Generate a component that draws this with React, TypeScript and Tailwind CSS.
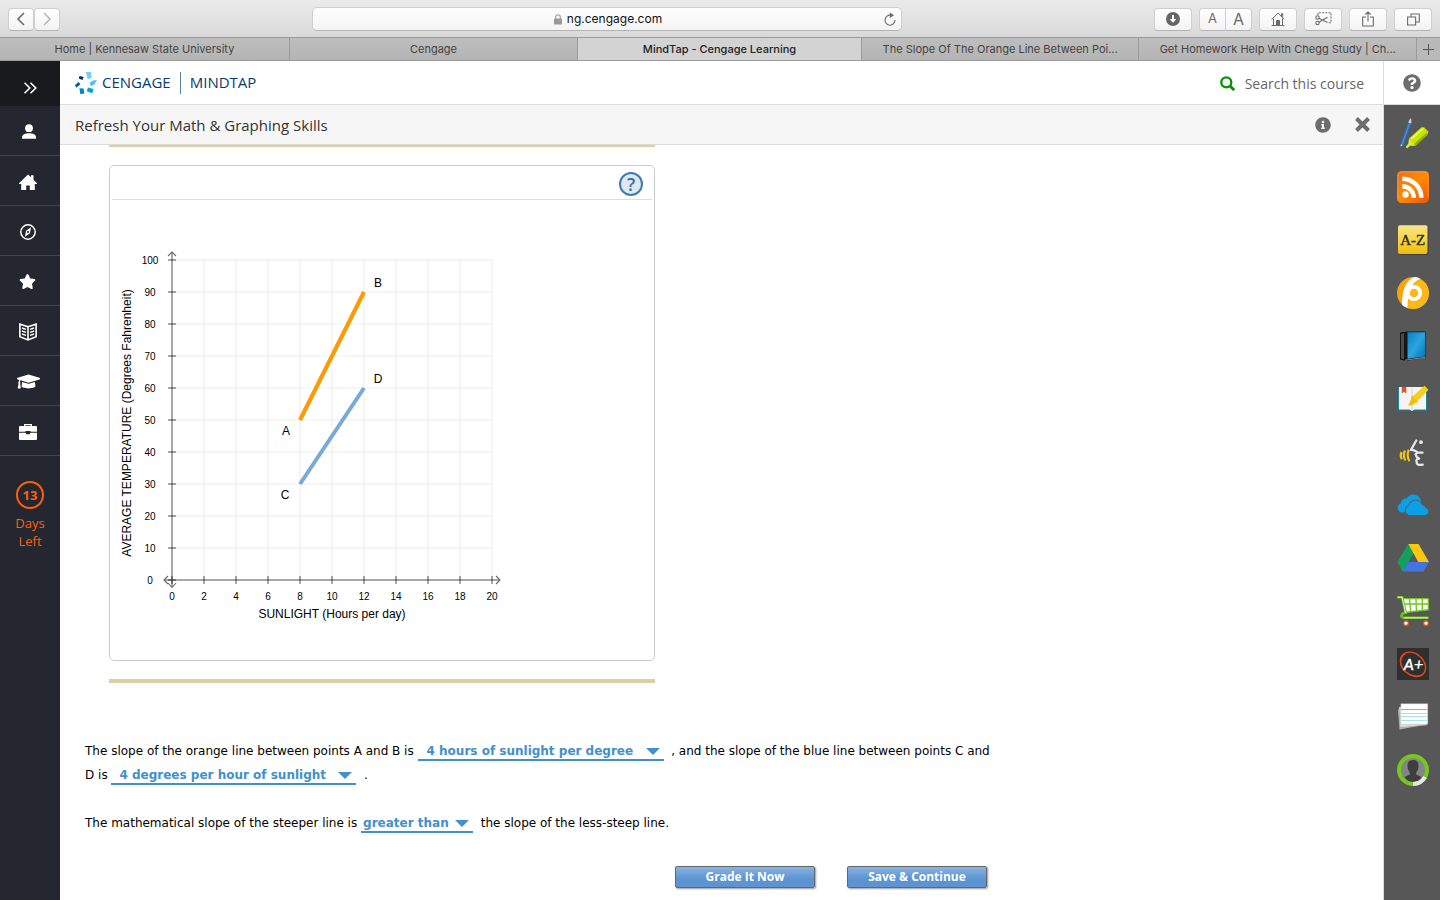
import type { ReactNode } from "react";
import { FaGraduationCap, FaInfoCircle, FaQuestionCircle, FaStar } from "react-icons/fa";

/* ---------- Browser chrome ---------- */

const chromeButton =
  "flex h-[23px] items-center justify-center rounded-[4px] border border-[#cfcfcf] border-b-[#b5b5b5] bg-gradient-to-b from-white to-[#f3f3f3] text-[#6b6b6b]";

function Toolbar() {
  return (
    <div className="flex h-[37px] items-center bg-gradient-to-b from-[#ebebeb] to-[#d9d9d9] px-2 pt-px">
      <div className="flex w-[304px] shrink-0">
        <button aria-label="Back" className={`${chromeButton} w-[26px]`}>
          <svg width="10" height="14" viewBox="0 0 10 14" fill="none" stroke="currentColor" strokeWidth="1.6">
            <path d="M8 1 2 7l6 6" />
          </svg>
        </button>
        <button aria-label="Forward" className={`${chromeButton} w-[26px]`}>
          <svg width="10" height="14" viewBox="0 0 10 14" fill="none" stroke="#b9b9b9" strokeWidth="1.6">
            <path d="m2 1 6 6-6 6" />
          </svg>
        </button>
      </div>
      <div className="flex h-[24px] flex-1 items-center rounded-[5px] border border-[#cfcfcf] border-b-[#b5b5b5] bg-gradient-to-b from-white to-[#f3f3f3] px-1 text-[12px] text-[#111]">
        <div className="flex flex-1 items-center justify-center gap-[5px] pl-4">
          <svg width="8" height="11" viewBox="0 0 8 11" fill="#9a9a9a">
            <rect y="4.5" width="8" height="6" rx="0.6" />
            <path d="M1.7 5V3a2.3 2.3 0 0 1 4.6 0v2" fill="none" stroke="#9a9a9a" strokeWidth="1.1" />
          </svg>
          <span>ng.cengage.com</span>
        </div>
        <button aria-label="Reload" className="text-[#6b6b6b]">
          <svg width="14" height="15" viewBox="0 0 14 15" fill="none" stroke="currentColor" strokeWidth="1.1">
            <path d="M7.5 3.2A5 5 0 1 0 12 8" />
            <path d="M6.8.5 11 3.2 6.8 6z" fill="currentColor" stroke="none" />
          </svg>
        </button>
      </div>
      <div className="ml-[252px] flex shrink-0 gap-[7px]">
        <button aria-label="Downloads" className={`${chromeButton} w-[38px]`}>
          <svg width="14" height="14" viewBox="0 0 14 14">
            <circle cx="7" cy="7" r="7" fill="#666" />
            <path d="M6 3h2v4h2.4L7 10.8 3.600 7H6z" fill="#fff" />
          </svg>
        </button>
        <div className="flex">
          <button aria-label="Smaller text" className={`${chromeButton} w-[27px] rounded-r-none text-[13px]`}>A</button>
          <button aria-label="Larger text" className={`${chromeButton} w-[26px] rounded-l-none border-l-0 text-[16px]`}>A</button>
        </div>
        <button aria-label="Home page" className={`${chromeButton} w-[38px]`}>
          <svg width="14" height="14" viewBox="0 0 14 14" fill="none" stroke="currentColor" strokeWidth="1">
            <path d="M.7 7.500 7 1l6.300 6.500M2.500 6.500v7h9v-7M10.500 4V1.500h1.200V5" />
            <path d="M5.500 8.500h3v5h-3zM.7 13.500h12.600" fill="currentColor" />
          </svg>
        </button>
        <button aria-label="Web clip" className={`${chromeButton} w-[38px]`}>
          <svg width="17" height="14" viewBox="0 0 17 14" fill="none" stroke="currentColor" strokeWidth="1.100">
            <path d="M3 3V.700h13v10h-3" strokeDasharray="2 1.200" />
            <circle cx="2.500" cy="5.500" r="1.700" />
            <circle cx="2.500" cy="11" r="1.700" />
            <path d="m4 6.300 8.500 4.200M4 10.200l8.500-5" />
          </svg>
        </button>
        <button aria-label="Share" className={`${chromeButton} w-[38px]`}>
          <svg width="12" height="16" viewBox="0 0 12 16" fill="none" stroke="currentColor" strokeWidth="1.100">
            <path d="M4 6H.7v9h10.600V6H8M6 10.500V1M3.300 3.500 6 .900l2.700 2.600" />
          </svg>
        </button>
        <button aria-label="Show all tabs" className={`${chromeButton} w-[38px]`}>
          <svg width="13" height="13" viewBox="0 0 13 13" fill="none" stroke="currentColor" strokeWidth="1.100">
            <path d="M.6 4h8v8h-8zM4 4V1h8.300v8H8.600" />
          </svg>
        </button>
      </div>
    </div>
  );
}

function Tab({ grow, active = false, children }: { grow: string; active?: boolean; children: ReactNode }) {
  return (
    <a
      href="#"
      aria-current={active ? "page" : undefined}
      className={`${grow} min-w-0 truncate border-r border-[#9b9b9b] px-4 text-center text-[11px] leading-[22px] ${
        active
          ? "bg-[#d3d3d3] font-medium text-[#222]"
          : "bg-gradient-to-b from-[#bebebe] to-[#b4b4b4] text-[#444]"
      }`}
    >
      {children}
    </a>
  );
}

function TabBar() {
  return (
    <nav aria-label="Tabs" className="flex h-6 border-y border-[#9b9b9b] bg-[#b9b9b9]">
      <Tab grow="flex-[291]">Home | Kennesaw State University</Tab>
      <Tab grow="flex-[289]">Cengage</Tab>
      <Tab grow="flex-[284]" active>MindTap - Cengage Learning</Tab>
      <Tab grow="flex-[277]">The Slope Of The Orange Line Between Poi...</Tab>
      <Tab grow="flex-[277]">Get Homework Help With Chegg Study | Ch...</Tab>
      <button aria-label="New tab" className="flex w-[23px] items-center justify-center">
        <svg width="11" height="11" viewBox="0 0 11 11" stroke="#555" strokeWidth="1">
          <path d="M5.500 0v11M0 5.500h11" />
        </svg>
      </button>
    </nav>
  );
}

/* ---------- Left navigation ---------- */

const navItems: { label: string; icon: ReactNode }[] = [
  {
    label: "Profile",
    icon: (
      <svg width="20" height="20" viewBox="0 0 20 20" fill="currentColor">
        <circle cx="11" cy="6.200" r="3.900" />
        <path d="M4 16.800v-1.300c0-3 3.200-4.300 7-4.300s7 1.300 7 4.300v1.300z" />
      </svg>
    ),
  },
  {
    label: "Home",
    icon: (
      <svg width="20" height="20" viewBox="0 0 20 20" fill="currentColor">
        <path d="M10 2.500 13 5.300V3.200h2.500v4.500L19 11.300v.700h-2.200v6H11.800v-4.500H8.200V18H3.200v-6H1v-.700z" />
      </svg>
    ),
  },
  {
    label: "Explore",
    icon: (
      <svg width="20" height="20" viewBox="0 0 20 20" fill="none" stroke="currentColor">
        <circle cx="10" cy="10" r="7.200" strokeWidth="1.500" />
        <path d="M13 5.300 12 11.200 7 14.800 8 8.800z" fill="currentColor" stroke="none" />
        <circle cx="10" cy="10" r="1.100" fill="#24272f" stroke="none" />
      </svg>
    ),
  },
  { label: "Favorites", icon: <FaStar size={17} className="mr-[2px]" /> },
  {
    label: "Reader",
    icon: (
      <svg width="20" height="20" viewBox="0 0 20 20" fill="none" stroke="currentColor" strokeWidth="1.600">
        <path d="M10 4.700 1.900 2.200v12.600L10 18l8.100-3.200V2.200zM10 4.700V18" />
        <path d="m4 6 4 1.300M4 9l4 1.300M4 12l4 1.300M16 6l-4 1.300M16 9l-4 1.300M16 12l-4 1.300" strokeWidth="1.400" />
      </svg>
    ),
  },
  { label: "Courses", icon: <FaGraduationCap size={23} /> },
  {
    label: "Career",
    icon: (
      <svg width="20" height="20" viewBox="0 0 20 20" fill="currentColor">
        <path d="M6.700 4V2.700h6.600V4" fill="none" stroke="currentColor" strokeWidth="1.300" />
        <path d="M2 4h16a1 1 0 0 1 1 1v4.800h-6.500V9h-5v.800H1V5a1 1 0 0 1 1-1zM1 10.800h6.500l1 1.500h3l1-1.500H19V17a1 1 0 0 1-1 1H2a1 1 0 0 1-1-1z" />
        <path d="M9 9.700h2v1.500H9z" fill="#24272f" />
      </svg>
    ),
  },
];

function LeftNav() {
  return (
    <nav aria-label="Course" className="w-[60px] shrink-0 bg-[#24272f] text-white">
      <button aria-label="Expand menu" className="flex h-[45px] w-full items-center justify-center bg-[#191a1d] pt-2">
        <svg width="14" height="12" viewBox="0 0 14 12" fill="none" stroke="currentColor" strokeWidth="1.600">
          <path d="m1.500.8 5.300 5.200-5.300 5.200M7.500.8 12.800 6 7.500 11.200" />
        </svg>
      </button>
      {navItems.map((item) => (
        <a
          key={item.label}
          href="#"
          aria-label={item.label}
          className="flex h-[50px] items-center justify-center border-b border-[#43454b] pt-[2px] pr-1"
        >
          {item.icon}
        </a>
      ))}
      <div className="mt-[25px] flex flex-col items-center font-['Open_Sans',sans-serif] text-[13px] leading-[18px] text-[#ff5e0e]">
        <span className="mb-[5px] flex size-7 items-center justify-center rounded-full border-2 border-[#ff5e0e] font-bold">
          13
        </span>
        <span>Days</span>
        <span>Left</span>
      </div>
    </nav>
  );
}

/* ---------- Right app dock ---------- */

function DockIcon({ children }: { children: ReactNode }) {
  return (
    <svg width="32" height="32" viewBox="0 0 32 32" fill="none">
      {children}
    </svg>
  );
}

const dockItems: { label: string; icon: ReactNode }[] = [
  {
    label: "Highlight and notes",
    icon: (
      <DockIcon>
        <path d="m11 4 3.300 1.200L7 26.500l-3.300 2.300.1-3.800z" fill="#2f6fbe" />
        <path d="m12.500 5.500-7.500 21" stroke="#5c97d8" strokeWidth="0.900" />
        <path d="m11.200 4.500 2-3.900 1 .2.200 4.700z" fill="#cfd3d8" />
        <path d="m3.700 28.800.1-2.600 1.700.700z" fill="#dfe3e8" />
        <path d="M12 20.500 24.500 9.300l2.500-.1 4.500 4.600-1.500 3.500L18.500 27.700h-5z" fill="#c8e300" />
        <path d="M30 17.300 18.500 27.700 17 26l13-11.500z" fill="#93a900" />
        <path d="m14 20 11.500-9.700 1.700.4L15.500 21.300z" fill="#e9f96a" />
        <path d="m12 20.800 5.800 6.700-4.300 0-3.500 3-1.200-1.500 2.500-3.500z" fill="#d9ee3c" />
      </DockIcon>
    ),
  },
  {
    label: "RSS feed",
    icon: (
      <DockIcon>
        <defs>
          <linearGradient id="rss" x1="0" y1="0" x2="1" y2="1">
            <stop offset="0" stopColor="#f26a1a" />
            <stop offset="0.500" stopColor="#ff8a00" />
            <stop offset="1" stopColor="#e85408" />
          </linearGradient>
        </defs>
        <rect width="32" height="32" rx="4.500" fill="url(#rss)" />
        <path d="M1 28V5a4 4 0 0 1 4-4h22a4 4 0 0 1 4 4v22" stroke="#ff9b4a" strokeWidth="0.700" />
        <circle cx="8.500" cy="23.500" r="3.200" fill="#fff" />
        <path d="M5.300 15.200a11.500 11.500 0 0 1 11.500 11.500M5.300 7.700a19 19 0 0 1 19 19" stroke="#fff" strokeWidth="4.400" />
      </DockIcon>
    ),
  },
  {
    label: "Glossary",
    icon: (
      <DockIcon>
        <defs>
          <linearGradient id="glossary" x1="0" y1="0" x2="0" y2="1">
            <stop offset="0" stopColor="#f8e488" />
            <stop offset="0.500" stopColor="#f7d648" />
            <stop offset="1" stopColor="#edbd0c" />
          </linearGradient>
        </defs>
        <rect x="2" y="2.500" width="29.500" height="28.500" rx="2" fill="#3d3d3d" />
        <rect x="1" y="1.300" width="29.500" height="28.700" rx="2" fill="url(#glossary)" />
        <text
          x="15.700"
          y="20.500"
          textAnchor="middle"
          fontSize="15"
          fill="#33301a"
          stroke="#33301a"
          strokeWidth="0.400"
          className="font-['Liberation_Serif',serif]"
        >
          A-Z
        </text>
      </DockIcon>
    ),
  },
  {
    label: "Study tools",
    icon: (
      <DockIcon>
        <circle cx="16" cy="16" r="16" fill="#f8a30a" />
        <path d="M24 2.200A16 16 0 0 1 16 32a16 16 0 0 1-5-.8C11 16 15 7 24 2.200z" fill="#fbb917" />
        <path d="M17.500 0a16 16 0 0 1 6 1.800C15 5 10.500 14 10.500 31a16 16 0 0 1-5.500-3.300C5 13 9 3 17.500 0z" fill="#fff" />
        <circle cx="17" cy="16" r="6.200" fill="#fbb917" stroke="#fff" strokeWidth="3.800" />
      </DockIcon>
    ),
  },
  {
    label: "Book",
    icon: (
      <DockIcon>
        <defs>
          <linearGradient id="book" x1="0" y1="0" x2="1" y2="1">
            <stop offset="0" stopColor="#0b7fc4" />
            <stop offset="0.500" stopColor="#2aa5e0" />
            <stop offset="1" stopColor="#0672b4" />
          </linearGradient>
        </defs>
        <path d="M3 2.500 10 1.500h18.500v26L9 31l-6-1.500z" fill="#151515" />
        <path d="m4 4 3-1v26l-3-.600z" fill="#4a4a4a" />
        <path d="M10.500 2.300h17.500v24.200L10.500 28.700z" fill="url(#book)" />
        <path d="M8 30.200 28 27.300" stroke="#b8b8b8" strokeWidth="0.700" />
      </DockIcon>
    ),
  },
  {
    label: "Notebook",
    icon: (
      <DockIcon>
        <path d="M1 4.500h29v23H1z" fill="#16889c" />
        <path d="M2 4h13v24l-2.500-1.500H2zM15 28V4h14v22.500H17.500z" fill="#f6f4f2" />
        <path d="M15 5v22" stroke="#dedad6" strokeWidth="1.300" />
        <path d="M4.800 4h4.500v6.500L7 8.700l-2.200 1.800z" fill="#e9501f" />
        <path d="M15.500 13.500 27.500 2.800l4 4L20 18.500z" fill="#f5d016" />
        <path d="m15 12.500 6.500 6.500-3.500 1-2.500 2.200-4.500.300 2-3.500z" fill="#edbf0e" />
      </DockIcon>
    ),
  },
  {
    label: "Read aloud",
    icon: (
      <DockIcon>
        <path
          d="M19.300 4.500 14 13.800c2.800.2 5 .7 6.300 2.700M18.500 18.500l1.800-1.800h5.200M19 19c.2 2 1.300 3 3.200 3.500-2.700.8-3.500 1.800-2.500 3.500-.5 2.300 1.500 3.300 6 2.700"
          stroke="#e8e8e8"
          strokeWidth="2.300"
          strokeLinejoin="round"
          strokeLinecap="round"
        />
        <circle cx="24" cy="6.200" r="1.900" fill="#e8e8e8" />
        <path
          d="M4.500 16c-1 2.300-1 5 .3 7.200M8 14.500c-1.500 3-1.500 7 .5 10M11.800 13.800c-1.500 3.200-1.300 8 .5 11.400"
          stroke="#edc619"
          strokeWidth="2.200"
        />
      </DockIcon>
    ),
  },
  {
    label: "OneDrive",
    icon: (
      <DockIcon>
        <path d="M4.500 23.500a4.700 4.700 0 0 1-.8-9 5.200 5.200 0 0 1 6-5 7.700 7.700 0 0 1 14.300 2.500l-4 10z" fill="#0aa0e6" />
        <path
          d="M12 26.500a5.200 5.200 0 0 1-.3-10 7.200 7.200 0 0 1 13.600-1 5.500 5.500 0 0 1 3.700 3.200 4 4 0 0 1-.5 7.800z"
          fill="#0aa0e6"
          stroke="#575757"
          strokeWidth="1"
        />
      </DockIcon>
    ),
  },
  {
    label: "Google Drive",
    icon: (
      <DockIcon>
        <path d="M11.300 2 16.800 11 5.700 29.500.3 20z" fill="#12a05c" />
        <path d="M11.300 2h10.200L32 20H21.300z" fill="#fcc80e" />
        <path d="M10.800 20H32l-5.500 9.500H5.700z" fill="#4374e0" />
      </DockIcon>
    ),
  },
  {
    label: "Store",
    icon: (
      <DockIcon>
        <path d="M5.500 3.500H31.500v11.500L8.500 17.500z" fill="#fff" />
        <path d="M6 3.700h25.300v11L8.300 17.500M6.500 9h24.800M12.500 4l1.200 12.500M19 4l.4 12M25.300 4v11" stroke="#6cc31a" strokeWidth="1.300" />
        <path d="M0 2.200h5.200l3.500 15.600C4 17.800 3 22.800 7 22.800h24.500" stroke="#6cc31a" strokeWidth="2.600" />
        <path d="M1 2.200h4L8.600 18M7 22.800h24" stroke="#fff" strokeWidth="0.800" />
        <circle cx="9" cy="28.200" r="2.300" fill="#fff" stroke="#e4551f" strokeWidth="1.300" />
        <circle cx="29" cy="28.200" r="2.300" fill="#fff" stroke="#e4551f" strokeWidth="1.300" />
      </DockIcon>
    ),
  },
  {
    label: "Grades",
    icon: (
      <DockIcon>
        <rect width="32" height="32" fill="#2f2f2f" />
        <ellipse cx="16" cy="16.300" rx="14" ry="10.500" transform="rotate(42 16 16.300)" stroke="#e2481c" strokeWidth="1.400" />
        <path d="M9 5.500C2.500 9.500 2 17 7 22.500c5 5.500 14 7.500 19 3.500" stroke="#e2481c" strokeWidth="1" />
        <text x="16.500" y="21.500" textAnchor="middle" fontSize="16" fontStyle="italic" fill="#fff" stroke="#fff" strokeWidth="0.400" className="font-['Lato',sans-serif]">
          A+
        </text>
      </DockIcon>
    ),
  },
  {
    label: "Flashcards",
    icon: (
      <DockIcon>
        <path d="M1 8.500 28 6l1.500 17.500L2.500 28.500z" fill="#b9b9b9" />
        <path d="m2 6 27-1.500 1 19.500-27 2.500z" fill="#e2e2e2" stroke="#8d8d8d" strokeWidth="0.500" />
        <path d="M3.800 2.700h27v20.500h-27z" fill="#fff" stroke="#a5a5a5" strokeWidth="0.400" />
        <path d="M4 8.500h26.500" stroke="#f28a80" strokeWidth="1" />
        <path d="M4 12.500h26.500M4 15.500h26.500M4 19.500h26.500" stroke="#a5d8ee" strokeWidth="0.900" />
      </DockIcon>
    ),
  },
  {
    label: "Account",
    icon: (
      <DockIcon>
        <circle cx="16" cy="16" r="12.500" fill="#858585" />
        <path
          d="M16 6c-4 0-5.600 2.500-5.500 6 0 2.700 1 5 2.300 6.500v2L7.500 23c1.500 3 5 5 8.500 5s7-2 8.500-5l-5.300-2.500v-2c1.300-1.500 2.300-3.800 2.300-6.500.1-3.500-1.500-6-5.500-6z"
          fill="#3e3e3e"
        />
        <circle cx="16" cy="16" r="14" stroke="#76c71e" strokeWidth="4" />
        <path d="M28.100 23A14 14 0 0 1 16 30" stroke="#e6e6e6" strokeWidth="4" />
      </DockIcon>
    ),
  },
];

function AppDock() {
  return (
    <aside className="flex w-[57px] shrink-0 flex-col border-l border-[#dcdcdc] bg-[#575757]">
      <div className="flex h-[44px] items-center justify-center border-b border-[#dcdcdc] bg-white">
        <button aria-label="Help" className="text-[#6d6d6d]">
          <FaQuestionCircle size={18} />
        </button>
      </div>
      <div className="flex flex-col items-center gap-[21px] pt-[13px] pl-[2px]">
        {dockItems.map((item) => (
          <a key={item.label} href="#" aria-label={item.label}>
            {item.icon}
          </a>
        ))}
      </div>
    </aside>
  );
}

/* ---------- Chart ---------- */

const px = (hours: number) => 62 + hours * 16;
const py = (degrees: number) => 380 - degrees * 3.2;
const hourTicks = [0, 2, 4, 6, 8, 10, 12, 14, 16, 18, 20];
const degreeTicks = [0, 10, 20, 30, 40, 50, 60, 70, 80, 90, 100];

function TemperatureChart() {
  return (
    <svg
      width="400"
      height="460"
      viewBox="0 0 400 460"
      role="img"
      aria-label="Average temperature against hours of sunlight per day"
      className="font-['Liberation_Sans',Arial,sans-serif]"
    >
      <g stroke="#000" strokeOpacity="0.035" strokeWidth="2">
        {hourTicks.slice(1).map((h) => (
          <path key={h} d={`M${px(h)} ${py(100)}V${py(0)}`} />
        ))}
        {degreeTicks.slice(1).map((d) => (
          <path key={d} d={`M${px(0)} ${py(d)}H${px(20)}`} />
        ))}
      </g>
      <g stroke="#000" strokeOpacity="0.34" strokeWidth="2">
        <path d="M62 53V387M55 380H389" />
        {hourTicks.map((h) => (
          <path key={h} d={`M${px(h)} 376v8`} />
        ))}
        {degreeTicks.map((d) => (
          <path key={d} d={`M58 ${py(d)}h8`} />
        ))}
      </g>
      <path d="m58 56 4-4 4 4M58 383l4 4.500 4-4.500M58 376l-4 4 4 4M386 376l4 4-4 4" fill="none" stroke="#666" strokeWidth="1.100" />
      <g fontSize="10" fill="#000" textAnchor="middle">
        {degreeTicks.map((d) => (
          <text key={d} x="40" y={py(d) + 4}>
            {d}
          </text>
        ))}
        {hourTicks.map((h) => (
          <text key={h} x={px(h)} y="400">
            {h}
          </text>
        ))}
      </g>
      <path d={`M${px(8)} ${py(50)}L${px(12)} ${py(90)}`} stroke="#ff9900" strokeWidth="4" />
      <path d={`M${px(8)} ${py(30)}L${px(12)} ${py(60)}`} stroke="#7aa9d8" strokeWidth="4" />
      <g fontSize="12" fill="#000" textAnchor="middle">
        <text x="176" y="235">A</text>
        <text x="268" y="87">B</text>
        <text x="175" y="299">C</text>
        <text x="268" y="183">D</text>
        <text x="222" y="418">SUNLIGHT (Hours per day)</text>
        <text transform="translate(21 223) rotate(-90)">AVERAGE TEMPERATURE (Degrees Fahrenheit)</text>
      </g>
    </svg>
  );
}

/* ---------- Question ---------- */

function BlankSelect({ label, width, indent, options }: { label: string; width: string; indent: string; options: string[] }) {
  return (
    <span className={`relative inline-block ${width}`}>
      <select
        aria-label={label}
        className={`block h-[17px] w-full appearance-none border-b-2 border-[#428fcd] bg-transparent ${indent} text-[12px] leading-[15px] font-bold text-[#428fcd]`}
      >
        {options.map((o) => (
          <option key={o}>{o}</option>
        ))}
      </select>
      <svg width="14" height="7" viewBox="0 0 14 7" fill="#428fcd" className="pointer-events-none absolute top-1 right-1">
        <path d="M0 0h14L7 7z" />
      </svg>
    </span>
  );
}

const actionButton =
  "h-[22px] w-[140px] rounded-[2px] border border-[#666] bg-gradient-to-b from-[#8ab4e0] to-[#5b93d3] to-60% font-['Open_Sans',sans-serif] text-[12px] leading-[20px] font-bold text-white shadow-[1px_1px_2px_rgba(0,0,0,0.4)]";

function Question() {
  return (
    <div className="max-w-[940px] pl-[25px] font-['DejaVu_Sans',Verdana,sans-serif] text-[12px] leading-6 text-black">
      <div className="ml-6 w-[546px]">
        <div className="h-[2px] bg-[#dbd19c]" />
        <section className="mt-[18px] rounded-[5px] border border-[#ccc]">
          <div className="mx-[2px] flex h-[34px] items-center justify-end border-b border-[#ddd] pt-[2px] pr-[9px]">
            <button
              aria-label="Graph help"
              className="flex size-6 items-center justify-center rounded-full border-2 border-[#4179b0] bg-[#dfe8ef] font-['Open_Sans',sans-serif] text-[18px] leading-5 font-semibold text-[#3a6fa6]"
            >
              ?
            </button>
          </div>
          <TemperatureChart />
        </section>
        <div className="mt-[18px] h-1 bg-[#dbd19c]" />
      </div>
      <p className="mt-14">
        The slope of the orange line between points A and B is{" "}
        <BlankSelect
          label="Slope of the orange line"
          width="w-[246px]"
          indent="pl-[9px]"
          options={["4 hours of sunlight per degree", "10 degrees per hour of sunlight"]}
        />{" "}
        &nbsp;, and the slope of the blue line between points C and{" "}
        <span className="whitespace-nowrap">D is</span>{" "}
        <BlankSelect
          label="Slope of the blue line"
          width="w-[245px]"
          indent="pl-2"
          options={["4 degrees per hour of sunlight", "7.5 degrees per hour of sunlight"]}
        />{" "}
        &nbsp;.
      </p>
      <p className="mt-6">
        The mathematical slope of the steeper line is{" "}
        <BlankSelect label="Comparison" width="w-[112px]" indent="pl-[2px]" options={["greater than", "less than", "equal to"]} />
        {" "}&nbsp;the slope of the less-steep line.
      </p>
      <div className="mt-[31px] flex justify-end gap-8 pr-[13px] pb-3">
        <button className={actionButton}>Grade It Now</button>
        <button className={actionButton}>Save &amp; Continue</button>
      </div>
    </div>
  );
}

/* ---------- Page ---------- */

function CengageLogo() {
  return (
    <a href="#" aria-label="Cengage MindTap" className="flex items-center font-['Open_Sans',sans-serif] text-[15px] text-[#0b3a6f]">
      <svg width="22" height="22" viewBox="0 0 22 22">
        <path d="M10.800 0h5l1 5.800-4.200 1.400z" fill="#74d0f7" />
        <path d="m22 8-2.800 4.800-3.300 1.500-1.400-3.500L18 8.500z" fill="#57c0f0" />
        <path d="m13 15.500 5.500 1.500-1.200 4.200-5.500-2z" fill="#00a0e4" />
        <path d="m4.500 16.300 4.200.200.500 5.300-4 .2z" fill="#0086d0" />
        <path d="m0 13 3.500-3 2 2.300-4.200 3.500z" fill="#00609f" />
        <path d="m4.500 4 4.200 1-1.200 3-3.800-1.500z" fill="#003865" />
      </svg>
      <span className="ml-[5px]">CENGAGE</span>
      <span className="mx-[9px] h-[22px] w-px bg-[#5c7fa3]" />
      <span>MINDTAP</span>
    </a>
  );
}

function Header() {
  return (
    <header className="flex h-[44px] items-center justify-between border-b border-[#dcdcdc] bg-white pr-[19px] pl-[15px]">
      <CengageLogo />
      <button className="flex items-center gap-[10px] pt-[2px] font-['Open_Sans',sans-serif] text-[14px] text-[#666]">
        <svg width="15" height="15" viewBox="0 0 15 15" fill="none" stroke="#0a8f0a">
          <circle cx="6.300" cy="6.300" r="5" strokeWidth="2.300" />
          <path d="m9.800 9.800 4.400 4.400" strokeWidth="2.800" />
        </svg>
        Search this course
      </button>
    </header>
  );
}

function TitleBar() {
  return (
    <div className="flex h-10 items-center justify-between border-b border-[#dcdcdc] bg-[#f6f6f6] pr-[13px] pl-[15px]">
      <h1 className="pt-[2px] font-['Open_Sans',sans-serif] text-[15px] text-[#333]">Refresh Your Math &amp; Graphing Skills</h1>
      <div className="flex items-center gap-6 text-[#6d6d6d]">
        <button aria-label="Activity information">
          <FaInfoCircle size={16} />
        </button>
        <button aria-label="Close activity">
          <svg width="15" height="15" viewBox="0 0 15 15" fill="none" stroke="currentColor" strokeWidth="4">
            <path d="m1.500 1.500 12 12M13.500 1.500l-12 12" />
          </svg>
        </button>
      </div>
    </div>
  );
}

export default function App() {
  return (
    <div className="flex min-h-screen flex-col bg-white font-['Inter',sans-serif]">
      <Toolbar />
      <TabBar />
      <div className="flex flex-1">
        <LeftNav />
        <div className="min-w-0 flex-1">
          <Header />
          <TitleBar />
          <main>
            <Question />
          </main>
        </div>
        <AppDock />
      </div>
    </div>
  );
}
